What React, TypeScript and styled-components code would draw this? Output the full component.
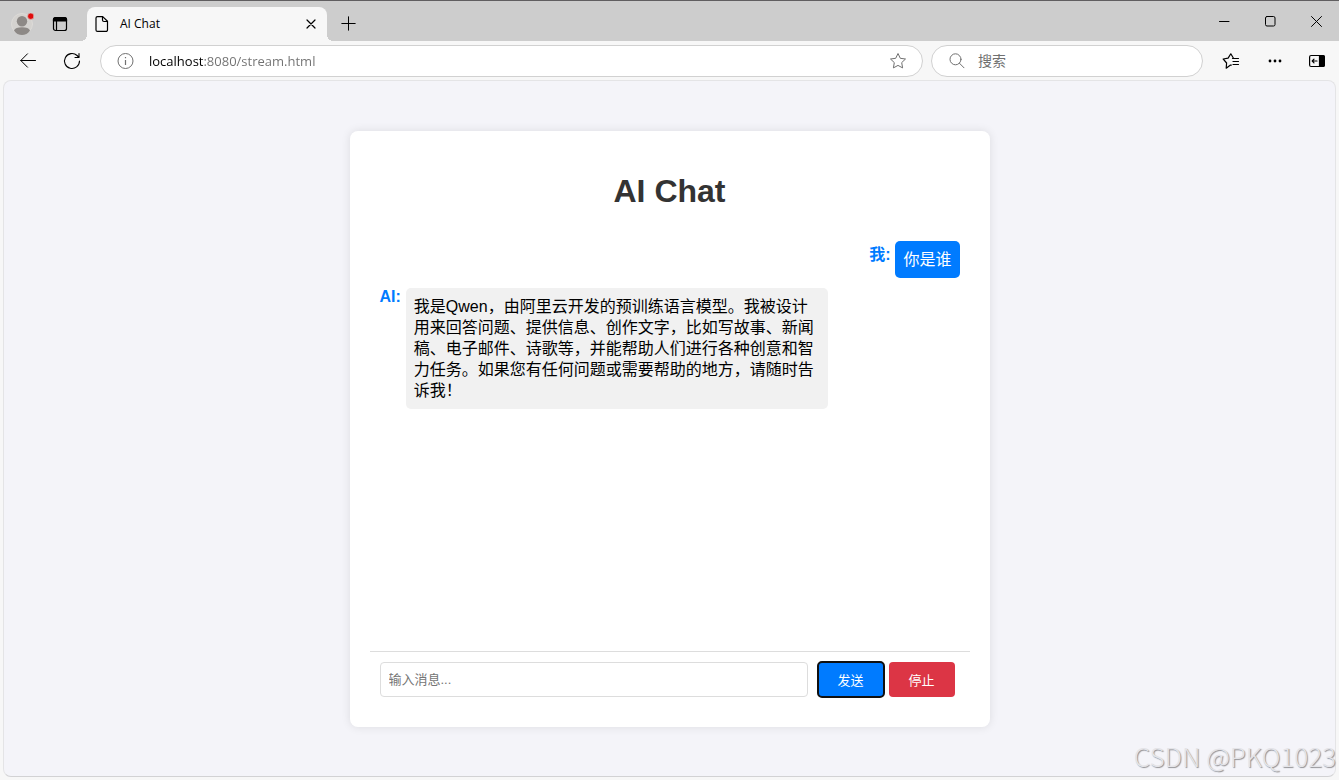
import React from "react";
import styled, { createGlobalStyle } from "styled-components";

const uiFont = `"Open Sans", "Noto Sans CJK SC", sans-serif`;
const pageFont = `"Liberation Sans", "Noto Sans CJK SC", sans-serif`;

const GlobalStyle = createGlobalStyle`
  * { box-sizing: border-box; }
  body { margin: 0; background: #f7f7f7; font-family: ${pageFont}; }
  button, input { font: inherit; }
`;

const Browser = styled.div`
  min-height: 100vh;
  display: flex;
  flex-direction: column;
  position: relative;
  font-family: ${uiFont};
`;

const TabStrip = styled.header`
  display: flex;
  height: 41px;
  background: #cdcdcd;
  border-top: 1px solid #605e60;
`;

const StripTools = styled.div`
  display: flex;
  align-items: center;
  gap: 16px;
  width: 87px;
  padding: 6px 0 0 10px;
`;

const IconButton = styled.button<{ $w?: number; $h?: number }>`
  display: flex;
  align-items: center;
  justify-content: center;
  flex: none;
  width: ${(p) => p.$w ?? 24}px;
  height: ${(p) => p.$h ?? 24}px;
  padding: 0;
  border: 0;
  background: transparent;
  color: #000;
`;

const Tab = styled.div`
  display: flex;
  align-items: center;
  position: relative;
  width: 240px;
  height: 34px;
  margin-top: 6px;
  padding: 0 4px 0 7px;
  gap: 10px;
  border-radius: 8px 8px 0 0;
  background: #f7f7f7;
  font-size: 12px;
  line-height: 16px;
  color: #000;

  &::before,
  &::after {
    content: "";
    position: absolute;
    bottom: 0;
    width: 6px;
    height: 6px;
  }
  &::before {
    right: 100%;
    background: radial-gradient(circle at 0 0, transparent 6px, #f7f7f7 6px);
  }
  &::after {
    left: 100%;
    background: radial-gradient(circle at 100% 0, transparent 6px, #f7f7f7 6px);
  }
`;

const TabTitle = styled.span`
  flex: 1;
`;

const NewTab = styled.div`
  display: flex;
  align-items: center;
  padding: 5px 0 0 9px;
`;

const WindowControls = styled.div`
  display: flex;
  margin-left: auto;
`;

const Toolbar = styled.nav`
  display: flex;
  align-items: center;
  height: 39px;
  padding: 1px 4px 0 0;
  background: #f7f7f7;
`;

const NavButtons = styled.div`
  display: flex;
  width: 100px;
  padding-left: 6px;
`;

const Pill = styled.form<{ $search?: boolean }>`
  display: flex;
  align-items: center;
  flex: ${(p) => (p.$search ? "0 1 272px" : "1 1 0")};
  height: 32px;
  margin-right: 8px;
  padding: 0 ${(p) => (p.$search ? 16 : 12)}px;
  gap: 12px;
  border: 1px solid #d1d1d1;
  border-radius: 16px;
  background: #fff;
  color: #707070;
`;

const Address = styled.input`
  flex: 1;
  min-width: 0;
  border: 0;
  padding: 0;
  outline: 0;
  font-size: 13px;
  line-height: 18px;
  /* host name is dark, the rest of the address is muted */
  background: linear-gradient(90deg, #000 55px, #707070 55px);
  background-clip: text;
  -webkit-background-clip: text;
  -webkit-text-fill-color: transparent;
`;

const SearchField = styled.input`
  flex: 1;
  min-width: 0;
  border: 0;
  padding: 0;
  outline: 0;
  font-size: 14px;
  line-height: 18px;
  background: transparent;
  &::placeholder { color: #707070; opacity: 1; }
`;

const ToolbarActions = styled.div`
  display: flex;
  gap: 4px;
`;

const Viewport = styled.main`
  flex: 1;
  margin: 0 3px 3px;
  padding: 50px 16px 40px;
  border: 1px solid #e4e4e6;
  border-bottom-color: #d2d2d4;
  border-radius: 8px;
  background: #f4f4f9;
  font-family: ${pageFont};
`;

const Card = styled.section`
  max-width: 640px;
  margin: 0 auto;
  padding: 20px;
  border-radius: 8px;
  background: #fff;
  box-shadow: 0 0 10px rgba(0, 0, 0, 0.1);
`;

const Title = styled.h1`
  margin: 21px 0;
  font-size: 32px;
  line-height: 38px;
  text-align: center;
  color: #333;
`;

const Messages = styled.div`
  display: flex;
  flex-direction: column;
  gap: 10px;
  height: 420px;
  padding: 10px;
  overflow-y: auto;
`;

const Message = styled.div<{ $mine?: boolean }>`
  display: flex;
  align-items: flex-start;
  justify-content: ${(p) => (p.$mine ? "flex-end" : "flex-start")};
`;

const Sender = styled.strong`
  flex: none;
  margin-right: 5px;
  font-size: 16px;
  color: #007bff;
`;

const Bubble = styled.p<{ $mine?: boolean }>`
  box-sizing: content-box;
  max-width: 70%;
  margin: 0;
  padding: 8px;
  border-radius: 5px;
  font-size: 16px;
  line-height: 21px;
  background: ${(p) => (p.$mine ? "#007bff" : "#f1f1f1")};
  color: ${(p) => (p.$mine ? "#fff" : "#000")};
`;

const Composer = styled.form`
  display: flex;
  gap: 5px;
  padding: 10px 15px 10px 10px;
  border-top: 1px solid #ddd;
`;

const MessageInput = styled.input`
  flex: 1;
  min-width: 0;
  height: 35px;
  margin-right: 5px;
  padding: 0 8px;
  border: 1px solid #ddd;
  border-radius: 4px;
  font-size: 13px;
  &::placeholder { color: #757575; opacity: 1; }
`;

const ActionButton = styled.button<{ $danger?: boolean }>`
  width: 66px;
  height: 35px;
  padding: 0;
  border: 0;
  border-radius: 4px;
  font-size: 13px;
  color: #fff;
  background: ${(p) => (p.$danger ? "#dc3545" : "#007bff")};
  outline: ${(p) => (p.$danger ? "0" : "2px solid #101010")};
  outline-offset: -1px;
`;

const Watermark = styled.div`
  position: absolute;
  right: 3px;
  bottom: 8px;
  font-family: "Noto Sans CJK SC", sans-serif;
  font-weight: 300;
  font-size: 26px;
  line-height: 32px;
  color: #e4e4e8;
  text-shadow: 1px 1px 1px #909094;
  pointer-events: none;
`;

const Icon = ({ size = 16, children, w = 1 }: { size?: number; w?: number; children: React.ReactNode }) => (
  <svg width={size} height={size} viewBox={`0 0 ${size} ${size}`} fill="none" stroke="currentColor" strokeWidth={w} strokeLinecap="round" strokeLinejoin="round" aria-hidden="true">
    {children}
  </svg>
);

const stay = (e: React.FormEvent) => e.preventDefault();

export default function App() {
  return (
    <Browser>
      <GlobalStyle />
      <TabStrip>
        <StripTools>
          <IconButton aria-label="Profile">
            <Icon size={24}>
              <circle cx="12" cy="12" r="10.5" fill="#d4d2cf" stroke="#dddbd8" />
              <circle cx="12" cy="9.200" r="5.2" fill="#8d8986" stroke="none" />
              <path d="M4 18.500c1-2.200 3.500-3.200 8-3.200s7 1 8 3.200c-1.800 3-4.800 4.500-8 4.500s-6.200-1.500-8-4.500z" fill="#8d8986" stroke="none" />
              <circle cx="20.800" cy="4.200" r="3.200" fill="#e00b0b" stroke="#d8d6d4" strokeWidth=".6" />
            </Icon>
          </IconButton>
          <IconButton aria-label="Tab actions" $w={20}>
            <Icon size={16} w={1.2}>
              <rect x="1.500" y="1.500" width="13" height="13" rx="2" />
              <path d="M1.500 4V3.500a2 2 0 0 1 2-2h9a2 2 0 0 1 2 2V5h-13z" fill="currentColor" />
              <path d="M4.500 5v9.500" />
            </Icon>
          </IconButton>
        </StripTools>
        <Tab>
          <Icon size={16} w={1.2}>
            <path d="M3.500.6h5.200L13.500 5.300v8.600a1.500 1.500 0 0 1-1.500 1.500H3.500A1.500 1.500 0 0 1 2 13.900V2.100A1.500 1.500 0 0 1 3.500.6z" />
            <path d="M8.500.8V4a1.500 1.500 0 0 0 1.500 1.500h3.300" />
          </Icon>
          <TabTitle>AI Chat</TabTitle>
          <IconButton aria-label="Close tab">
            <Icon size={10} w={1.2}><path d="M1 1l8 8M9 1l-8 8" /></Icon>
          </IconButton>
        </Tab>
        <NewTab>
          <IconButton aria-label="New tab">
            <Icon size={15}><path d="M7.500.8v13.400M.8 7.500h13.400" /></Icon>
          </IconButton>
        </NewTab>
        <WindowControls>
          <IconButton aria-label="Minimize" $w={46} $h={40}>
            <Icon size={11}><path d="M.5 5.500h9.500" /></Icon>
          </IconButton>
          <IconButton aria-label="Maximize" $w={46} $h={40}>
            <Icon size={11}><rect x=".5" y=".5" width="9.500" height="9.500" rx="1.500" /></Icon>
          </IconButton>
          <IconButton aria-label="Close" $w={46} $h={40}>
            <Icon size={11}><path d="M.5.5l10 10M10.500.5l-10 10" /></Icon>
          </IconButton>
        </WindowControls>
      </TabStrip>

      <Toolbar>
        <NavButtons>
          <IconButton aria-label="Back" $w={44} $h={32}>
            <Icon size={16}><path d="M15.500 7.500H.8M7.500.8L.8 7.500l6.700 6.700" /></Icon>
          </IconButton>
          <IconButton aria-label="Refresh" $w={44} $h={32}>
            <Icon size={18} w={1.1}><path d="M16.500 9a7.500 7.500 0 1 1-2.400-5.500L16 5.500M16 1.500v4h-4" /></Icon>
          </IconButton>
        </NavButtons>
        <Pill onSubmit={stay}>
          <IconButton type="button" aria-label="Site information">
            <svg width="18" height="18" viewBox="0 0 18 18" fill="none" stroke="#707070" aria-hidden="true">
              <circle cx="9.500" cy="9" r="7.500" />
              <path d="M9.500 8v5M9.500 5v1.300" strokeWidth="1.200" />
            </svg>
          </IconButton>
          <Address aria-label="Address" defaultValue="localhost:8080/stream.html" spellCheck={false} />
          <IconButton type="button" aria-label="Add to favorites">
            <svg width="18" height="18" viewBox="0 0 18 18" fill="none" stroke="#707070" strokeLinejoin="round" aria-hidden="true">
              <path d="M9 1.500l2.300 4.800 5.200.7-3.800 3.600.9 5.300L9 13.400l-4.600 2.500.9-5.300L1.500 7l5.200-.7z" />
            </svg>
          </IconButton>
        </Pill>
        <Pill $search onSubmit={stay}>
          <Icon size={18}><circle cx="7.500" cy="7.300" r="5.500" /><path d="M11.500 11.300l4.500 4.500" /></Icon>
          <SearchField aria-label="搜索" placeholder="搜索" />
        </Pill>
        <ToolbarActions>
          <IconButton aria-label="Favorites" $w={40} $h={32}>
            <Icon size={18} w={1.2}>
              <path d="M9.300 13.200L8.500 13l-4.300 3.200.4-5.200L1.200 7l4.900-.9L8.800 1.800l2.400 4M10.500 6.500h6M11 9.500h5.500M11 12.500h5.500" />
            </Icon>
          </IconButton>
          <IconButton aria-label="More" $w={40} $h={32}>
            <svg width="16" height="4" viewBox="0 0 16 4" fill="currentColor" aria-hidden="true">
              <circle cx="3" cy="2" r="1.400" /><circle cx="8" cy="2" r="1.400" /><circle cx="13" cy="2" r="1.400" />
            </svg>
          </IconButton>
          <IconButton aria-label="Sidebar" $w={36} $h={32}>
            <Icon size={16} w={1.2}>
              <rect x=".6" y="2.500" width="14.800" height="11" rx="1.500" />
              <path d="M10.500 2.500h3.400a1.500 1.500 0 0 1 1.500 1.500v8a1.500 1.500 0 0 1-1.500 1.500h-3.400z" fill="currentColor" />
              <path d="M8 8H3.500M5 6.200L3.200 8 5 9.800" />
            </Icon>
          </IconButton>
        </ToolbarActions>
      </Toolbar>

      <Viewport>
        <Card>
          <Title>AI Chat</Title>
          <Messages>
            <Message $mine>
              <Sender>我:</Sender>
              <Bubble $mine>你是谁</Bubble>
            </Message>
            <Message>
              <Sender>AI:</Sender>
              <Bubble>
                我是Qwen，由阿里云开发的预训练语言模型。我被设计用来回答问题、提供信息、创作文字，比如写故事、新闻稿、电子邮件、诗歌等，并能帮助人们进行各种创意和智力任务。如果您有任何问题或需要帮助的地方，请随时告诉我！
              </Bubble>
            </Message>
          </Messages>
          <Composer onSubmit={stay}>
            <MessageInput aria-label="输入消息" placeholder="输入消息..." />
            <ActionButton type="submit">发送</ActionButton>
            <ActionButton type="button" $danger>停止</ActionButton>
          </Composer>
        </Card>
      </Viewport>
      <Watermark>CSDN @PKQ1023</Watermark>
    </Browser>
  );
}
